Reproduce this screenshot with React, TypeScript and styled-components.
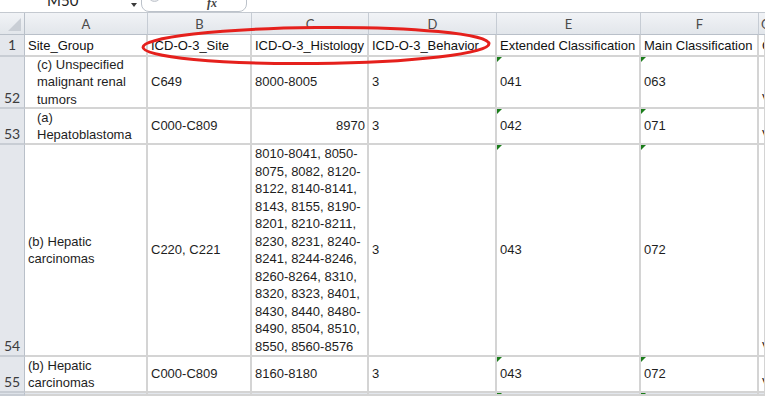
import React from 'react';
import styled, { createGlobalStyle } from 'styled-components';

const GlobalStyle = createGlobalStyle`
  html, body {
    margin: 0;
    padding: 0;
    background: #fff;
  }
  body {
    font-family: 'Liberation Sans', Arial, sans-serif;
  }
`;

const COLS = '25px 123px 104px 117px 128px 144px 118px 1fr';
const ROWS = '22px 22px 52px 36px 212px 36px 1fr';

interface SheetRow {
  num: string;
  group: string;
  indent?: boolean;
  site: string;
  histology: string;
  histRight?: boolean;
  behavior: string;
  extended: string;
  main: string;
}

const rows: SheetRow[] = [
  {
    num: '52',
    group: '(c) Unspecified malignant renal tumors',
    indent: true,
    site: 'C649',
    histology: '8000-8005',
    behavior: '3',
    extended: '041',
    main: '063',
  },
  {
    num: '53',
    group: '(a) Hepatoblastoma',
    indent: true,
    site: 'C000-C809',
    histology: '8970',
    histRight: true,
    behavior: '3',
    extended: '042',
    main: '071',
  },
  {
    num: '54',
    group: '(b) Hepatic carcinomas',
    site: 'C220, C221',
    histology:
      '8010-8041, 8050-8075, 8082, 8120-8122, 8140-8141, 8143, 8155, 8190-8201, 8210-8211, 8230, 8231, 8240-8241, 8244-8246, 8260-8264, 8310, 8320, 8323, 8401, 8430, 8440, 8480-8490, 8504, 8510, 8550, 8560-8576',
    behavior: '3',
    extended: '043',
    main: '072',
  },
  {
    num: '55',
    group: '(b) Hepatic carcinomas',
    site: 'C000-C809',
    histology: '8160-8180',
    behavior: '3',
    extended: '043',
    main: '072',
  },
];

const headers = [
  'Site_Group',
  'ICD-O-3_Site',
  'ICD-O-3_Histology',
  'ICD-O-3_Behavior',
  'Extended Classification',
  'Main Classification',
  'C',
];

// Excel wraps long code lists after the hyphens, browsers don't by default
const hyphenBreaks = (text: string) => {
  const parts = text.split('-');
  return parts.map((p, i) => (
    <React.Fragment key={i}>
      {p}
      {i < parts.length - 1 && (
        <>
          -<wbr />
        </>
      )}
    </React.Fragment>
  ));
};

export const App = () => {
  return (
    <Page>
      <GlobalStyle />
      <FormulaBar>
        <NameBox>M50</NameBox>
        <DropArrow />
        <FxBox>
          <FxKnob />
          <FxLabel>fx</FxLabel>
        </FxBox>
        <FormulaInput />
      </FormulaBar>

      <Sheet>
        <Corner>
          <CornerMark />
        </Corner>
        {['A', 'B', 'C', 'D', 'E', 'F', 'G'].map((l) => (
          <ColHead key={l} $last={l === 'G'}>
            {l}
          </ColHead>
        ))}

        <RowHead $valign='center'>1</RowHead>
        {headers.map((h) => (
          <TitleCell key={h}>{h}</TitleCell>
        ))}

        {rows.map((r) => (
          <React.Fragment key={r.num}>
            <RowHead $valign='flex-end'>{r.num}</RowHead>
            <Cell $indent={r.indent ? 9 : 0}>{r.group}</Cell>
            <Cell>{r.site}</Cell>
            <Cell $align={r.histRight ? 'right' : 'left'}>
              {hyphenBreaks(r.histology)}
            </Cell>
            <Cell>{r.behavior}</Cell>
            <Cell $flag>{r.extended}</Cell>
            <Cell $flag>{r.main}</Cell>
            <Cell $valign='flex-end'>V</Cell>
          </React.Fragment>
        ))}

        <RowHead $valign='flex-end' $tail />
        {[0, 1, 2, 3, 4, 5, 6].map((i) => (
          <TailCell key={i} $flag={i === 4 || i === 5} />
        ))}
      </Sheet>

      <Marker
        width='765'
        height='396'
        viewBox='0 0 765 396'
      >
        <ellipse
          cx='316'
          cy='45.5'
          rx='173'
          ry='18'
          fill='none'
          stroke='#e5201c'
          strokeWidth='3'
          transform='rotate(-0.6 316 45.5)'
        />
      </Marker>
    </Page>
  );
};

const Page = styled.div`
  position: relative;
  width: 765px;
  height: 396px;
  overflow: hidden;
  background: #fff;
`;

const FormulaBar = styled.div`
  height: 12px;
  display: flex;
  align-items: flex-end;
  overflow: hidden;
  background: #fff;
  border-bottom: 1px solid #c4c9d0;
`;

const NameBox = styled.div`
  flex: 0 0 130px;
  box-sizing: border-box;
  height: 24px;
  padding: 0 0 4px 47px;
  display: flex;
  align-items: flex-end;
  font-family: Lato, 'Liberation Sans', sans-serif;
  font-size: 15px;
  line-height: 15px;
  color: #1d1d1d;
`;

const DropArrow = styled.span`
  align-self: flex-start;
  margin: 3px 0 0 1px;
  width: 0;
  height: 0;
  border-left: 3.5px solid transparent;
  border-right: 3.5px solid transparent;
  border-top: 4px solid #3a3a3a;
`;

const FxBox = styled.div`
  flex: 0 0 106px;
  box-sizing: border-box;
  margin-left: 4px;
  height: 24px;
  border: 1px solid #bcc2ca;
  border-radius: 8px;
  display: flex;
  align-items: flex-end;
  padding: 0 0 2px 6px;
`;

const FxKnob = styled.span`
  width: 11px;
  height: 11px;
  margin-bottom: 7px;
  border-radius: 50%;
  border: 1px solid #c3c8cf;
  background: #e6e8eb;
`;

const FxLabel = styled.span`
  margin-left: 46px;
  font-family: 'Liberation Serif', serif;
  font-style: italic;
  font-weight: bold;
  font-size: 12px;
  line-height: 12px;
  color: #444;
`;

const FormulaInput = styled.div`
  flex: 1;
  height: 24px;
`;

const Sheet = styled.div`
  display: grid;
  grid-template-columns: ${COLS};
  grid-template-rows: ${ROWS};
  height: 383px;
`;

const Corner = styled.div`
  position: relative;
  background: linear-gradient(#f1f3f6, #e2e6eb);
  border-right: 1px solid #b9c0c9;
  border-bottom: 1px solid #b9c0c9;
`;

const CornerMark = styled.span`
  position: absolute;
  right: 3px;
  bottom: 3px;
  width: 0;
  height: 0;
  border-left: 13px solid transparent;
  border-bottom: 13px solid #c9ced5;
`;

const ColHead = styled.div<{ $last?: boolean }>`
  box-sizing: border-box;
  display: flex;
  align-items: center;
  justify-content: ${(p) => (p.$last ? 'flex-start' : 'center')};
  padding-left: ${(p) => (p.$last ? '2px' : '0')};
  overflow: hidden;
  background: linear-gradient(#f1f3f6, #e2e6eb);
  border-right: 1px solid #c6ccd4;
  border-bottom: 1px solid #b9c0c9;
  font-family: Lato, 'Liberation Sans', sans-serif;
  font-size: 13px;
  color: #4a4a4a;
`;

const RowHead = styled.div<{ $valign: string; $tail?: boolean }>`
  box-sizing: border-box;
  display: flex;
  flex-direction: column;
  justify-content: ${(p) => p.$valign};
  align-items: center;
  padding-bottom: 1px;
  background: ${(p) => (p.$tail ? '#dde2e9' : '#e4e7ec')};
  border-right: 1px solid #b9c0c9;
  border-bottom: 2px solid #c8cdd4;
  font-family: Lato, 'Liberation Sans', sans-serif;
  font-size: 14px;
  line-height: 17px;
  color: #3c3c3c;
`;

const TitleCell = styled.div`
  box-sizing: border-box;
  display: flex;
  align-items: center;
  padding: 0 2px 0 3px;
  white-space: nowrap;
  overflow: hidden;
  border-right: 2px solid #d4d4d4;
  border-bottom: 2px solid #d4d4d4;
  font-family: 'Liberation Sans', Arial, sans-serif;
  font-size: 13px;
  color: #111;
`;

const Cell = styled.div<{
  $align?: 'left' | 'right';
  $valign?: string;
  $indent?: number;
  $flag?: boolean;
}>`
  position: relative;
  box-sizing: border-box;
  display: flex;
  flex-direction: column;
  justify-content: ${(p) => p.$valign || 'center'};
  padding: 0 2px 0 ${(p) => 3 + (p.$indent || 0)}px;
  overflow: hidden;
  text-align: ${(p) => p.$align || 'left'};
  border-right: 2px solid #d4d4d4;
  border-bottom: 2px solid #d4d4d4;
  font-family: 'Liberation Sans', Arial, sans-serif;
  font-size: 13px;
  line-height: 17.5px;
  color: #1e1e1e;

  &::before {
    content: '';
    display: ${(p) => (p.$flag ? 'block' : 'none')};
    position: absolute;
    top: 0;
    left: 0;
    width: 0;
    height: 0;
    border-top: 5px solid #1b7d1b;
    border-right: 5px solid transparent;
  }
`;

const TailCell = styled(Cell)`
  background: #e3e7ed;
`;

const Marker = styled.svg`
  position: absolute;
  left: 0;
  top: 0;
  pointer-events: none;
`;

export default App;
